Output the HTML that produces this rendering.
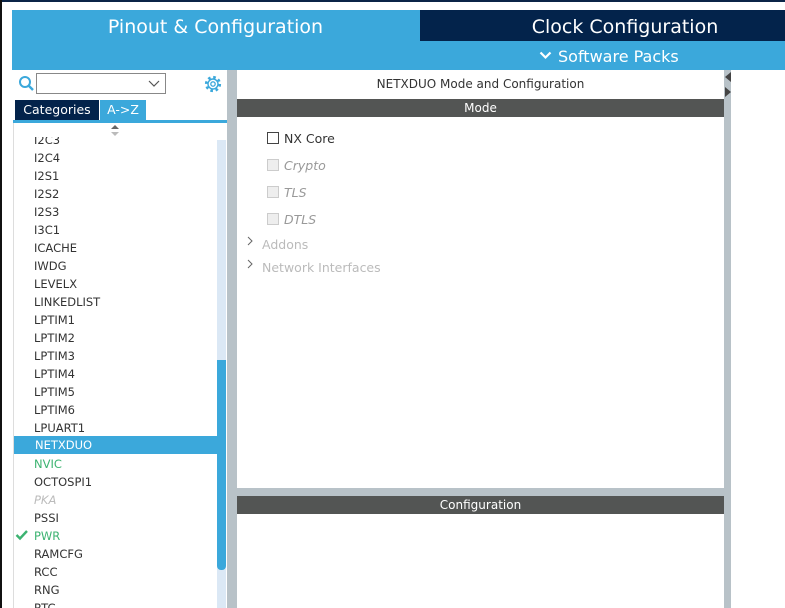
<!DOCTYPE html><html><head><style>
*{margin:0;padding:0;box-sizing:border-box}
body{width:785px;height:608px;overflow:hidden;background:#fff;position:relative;font-family:"DejaVu Sans","Liberation Sans",sans-serif;}
.a{position:absolute}
.it{position:absolute;left:20px;font-size:11.5px;color:#333;line-height:18px}
</style></head><body>
<div class="a" style="left:0;top:0;width:785px;height:2px;background:#0b2447"></div>
<div class="a" style="left:0;top:0;width:2px;height:608px;background:#111"></div>
<div class="a" style="left:12px;top:10px;width:773px;height:60px;background:#3ba8db"></div>
<div class="a" style="left:12px;top:10px;width:407px;height:31px;color:#fff;font-size:19px;text-align:center;line-height:34px">Pinout &amp; Configuration</div>
<div class="a" style="left:420px;top:10px;width:365px;height:31px;background:#03234b;color:#fff;font-size:19px;text-align:center;line-height:34px;padding-left:45px">Clock Configuration</div>
<div class="a" style="left:558px;top:41px;height:29px;color:#fff;font-size:16px;line-height:31px">Software Packs</div>
<svg class="a" style="left:539px;top:51px" width="14" height="10"><path d="M1.5 1.5 L6.5 6.5 L11.5 1.5" stroke="#fff" stroke-width="2.2" fill="none"/></svg>
<!-- left panel -->
<svg class="a" style="left:18px;top:75px" width="18" height="18"><circle cx="7" cy="7" r="5" stroke="#3ba8db" stroke-width="2" fill="none"/><path d="M10.5 10.5 L15 15" stroke="#3ba8db" stroke-width="2.4"/></svg>
<div class="a" style="left:36px;top:73px;width:130px;height:21px;border:1px solid #888;background:#fff"></div>
<svg class="a" style="left:148px;top:80px" width="12" height="8"><path d="M1 1 L6 6 L11 1" stroke="#555" stroke-width="1.2" fill="none"/></svg>
<svg class="a" style="left:204px;top:75px" width="18" height="18" viewBox="0 0 18 18"><circle cx="9" cy="9" r="6.8" stroke="#3ba8db" stroke-width="2.6" fill="none" stroke-dasharray="2.6 2.74"/><circle cx="9" cy="9" r="5" stroke="#3ba8db" stroke-width="1.4" fill="none"/><circle cx="9" cy="9" r="2.2" stroke="#3ba8db" stroke-width="1.3" fill="none"/></svg>
<div class="a" style="left:15px;top:100px;width:84px;height:20px;background:#03234b;color:#fff;font-size:12.5px;text-align:center;line-height:20px">Categories</div>
<div class="a" style="left:100px;top:100px;width:46px;height:20px;background:#3ba8db;color:#fff;font-size:12.5px;text-align:center;line-height:20px">A-&gt;Z</div>
<div class="a" style="left:13px;top:120px;width:215px;height:3px;background:#3ba8db"></div>
<div class="a" style="left:13px;top:123px;width:1px;height:485px;background:#ddd"></div>
<svg class="a" style="left:110px;top:124px" width="10" height="14"><path d="M1 5 L5 1 L9 5Z" fill="#666"/><path d="M1 8 L5 12 L9 8Z" fill="#bbb"/></svg>
<div class="a" style="left:217px;top:140px;width:9px;height:468px;background:#dbe8f5"></div>
<div class="a" style="left:217px;top:360px;width:9px;height:210px;background:#3ba8db;border-radius:0 0 4px 4px"></div>
<div class="a" style="left:14px;top:137px;width:203px;height:471px;overflow:hidden">
<div style="position:relative;top:-136px">
<div class="it" style="top:130px">I2C3</div>
<div class="it" style="top:148px">I2C4</div>
<div class="it" style="top:166px">I2S1</div>
<div class="it" style="top:184px">I2S2</div>
<div class="it" style="top:202px">I2S3</div>
<div class="it" style="top:220px">I3C1</div>
<div class="it" style="top:238px">ICACHE</div>
<div class="it" style="top:256px">IWDG</div>
<div class="it" style="top:274px">LEVELX</div>
<div class="it" style="top:292px">LINKEDLIST</div>
<div class="it" style="top:310px">LPTIM1</div>
<div class="it" style="top:328px">LPTIM2</div>
<div class="it" style="top:346px">LPTIM3</div>
<div class="it" style="top:364px">LPTIM4</div>
<div class="it" style="top:382px">LPTIM5</div>
<div class="it" style="top:400px">LPTIM6</div>
<div class="it" style="top:418px">LPUART1</div>
<div class="a" style="left:0;top:435px;width:203px;height:18px;background:#3ba8db"></div>
<div class="it" style="top:435px;left:21px;color:#fff">NETXDUO</div>
<div class="it" style="top:454px;color:#3cb371">NVIC</div>
<div class="it" style="top:472px">OCTOSPI1</div>
<div class="it" style="top:490px;color:#bbb;font-style:italic">PKA</div>
<div class="it" style="top:508px">PSSI</div>
<div class="it" style="top:526px;color:#3cb371">PWR</div>
<div class="it" style="top:544px">RAMCFG</div>
<div class="it" style="top:562px">RCC</div>
<div class="it" style="top:580px">RNG</div>
<div class="it" style="top:598px">RTC</div>
</div></div>
<svg class="a" style="left:15px;top:529px" width="14" height="12"><path d="M1.5 6 L5 9.5 L12 2" stroke="#3cb371" stroke-width="2.4" fill="none"/></svg>
<!-- splitter & right -->
<div class="a" style="left:227px;top:70px;width:10px;height:538px;background:#b8c2c8"></div>
<div class="a" style="left:724px;top:70px;width:7px;height:538px;background:#b8c2c8"></div>
<svg class="a" style="left:724px;top:71px" width="8" height="30"><path d="M7 1 L1 6 L7 11Z M1 16 L7 21 L1 26Z" fill="#444"/></svg>
<div class="a" style="left:237px;top:77px;width:487px;text-align:center;font-size:12px;color:#333">NETXDUO Mode and Configuration</div>
<div class="a" style="left:237px;top:99px;width:487px;height:18px;background:#535554;color:#fff;font-size:12px;text-align:center;line-height:19px">Mode</div>
<div class="a" style="left:267px;top:132px;width:12px;height:12px;border:1px solid #444"></div>
<div class="a" style="left:284px;top:131px;font-size:12.5px;color:#333">NX Core</div>
<div class="a" style="left:267px;top:159px;width:12px;height:12px;border:1px solid #ccc;background:#eee"></div>
<div class="a" style="left:284px;top:158px;font-size:12.5px;color:#999;font-style:italic">Crypto</div>
<div class="a" style="left:267px;top:186px;width:12px;height:12px;border:1px solid #ccc;background:#eee"></div>
<div class="a" style="left:284px;top:185px;font-size:12.5px;color:#999;font-style:italic">TLS</div>
<div class="a" style="left:267px;top:213px;width:12px;height:12px;border:1px solid #ccc;background:#eee"></div>
<div class="a" style="left:284px;top:212px;font-size:12.5px;color:#999;font-style:italic">DTLS</div>
<svg class="a" style="left:246px;top:236px" width="8" height="10"><path d="M2 1 L6 5 L2 9" stroke="#666" stroke-width="1" fill="none"/></svg>
<div class="a" style="left:262px;top:237px;font-size:12.5px;color:#bbb">Addons</div>
<svg class="a" style="left:246px;top:259px" width="8" height="10"><path d="M2 1 L6 5 L2 9" stroke="#666" stroke-width="1" fill="none"/></svg>
<div class="a" style="left:262px;top:260px;font-size:12.5px;color:#bbb">Network Interfaces</div>
<div class="a" style="left:237px;top:488px;width:487px;height:8px;background:#b8c2c8"></div>
<div class="a" style="left:237px;top:496px;width:487px;height:18px;background:#535554;color:#fff;font-size:12px;text-align:center;line-height:19px">Configuration</div>
</body></html>
